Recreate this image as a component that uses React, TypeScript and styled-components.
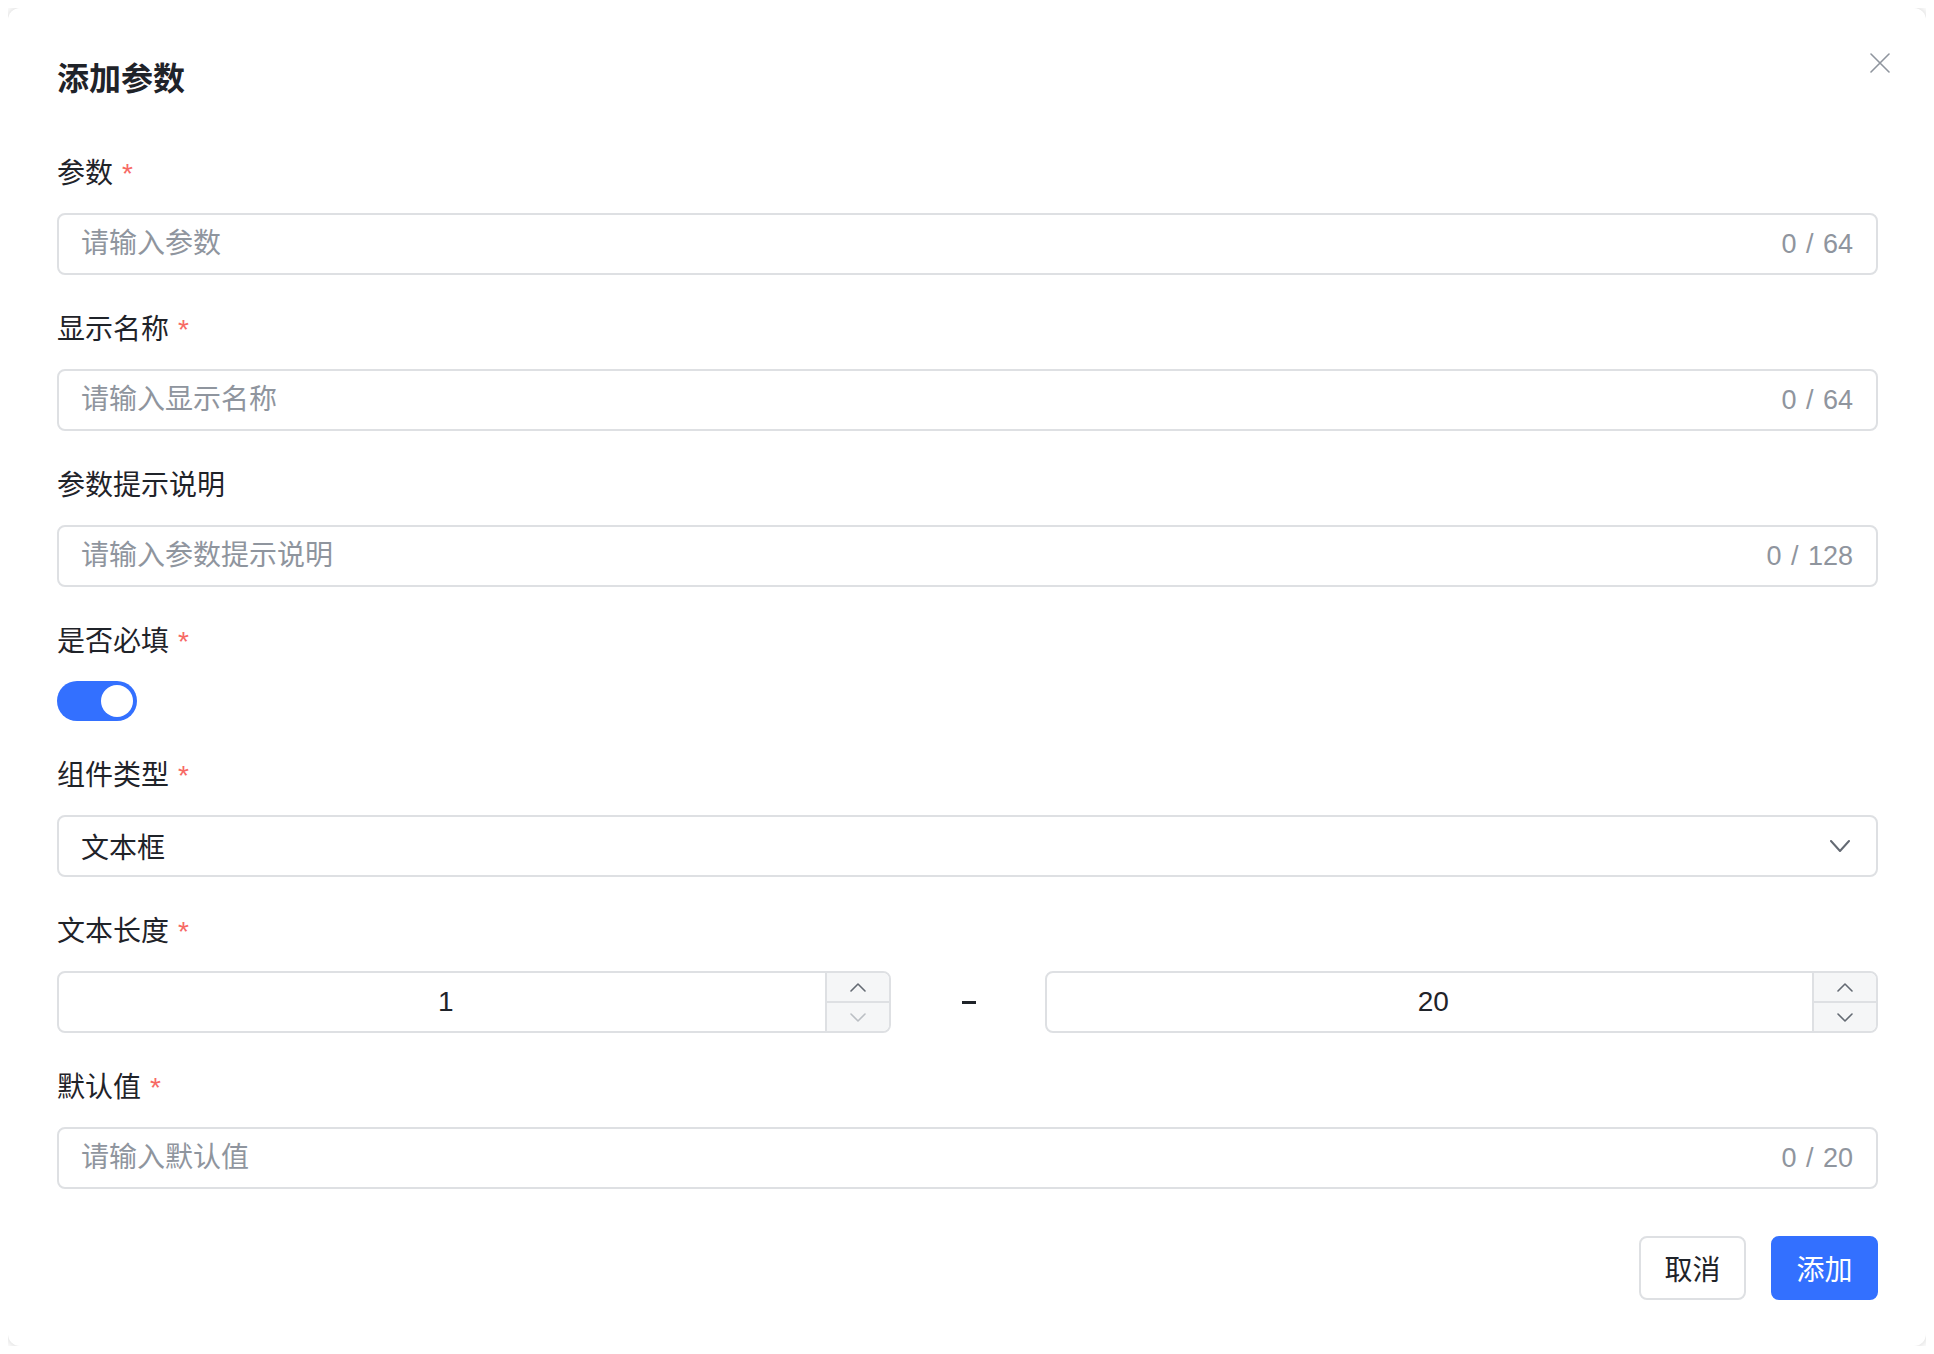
import styled, { createGlobalStyle } from "styled-components";

const GlobalCSS = createGlobalStyle`
  html, body {
    margin: 0;
    padding: 0;
    background: #ffffff;
  }
  body {
    margin: 8px;
    font-family: "Liberation Sans", "Noto Sans CJK SC", sans-serif;
    color: #1f2329;
  }
  * {
    box-sizing: border-box;
  }
`;

const Dialog = styled.div`
  position: relative;
  display: flex;
  flex-direction: column;
  height: calc(100vh - 16px);
  padding: 50px 48px 46px 49px;
  background: #ffffff;
  border-radius: 12px;
  box-shadow: 0 0 9px rgba(0, 0, 0, 0.2);
`;

const Title = styled.h2`
  margin: 0 0 55px;
  font-size: 32px;
  line-height: 42px;
  font-weight: 600;
  color: #1f2329;
`;

const CloseButton = styled.button`
  position: absolute;
  top: 45px;
  right: 36px;
  width: 20px;
  height: 20px;
  padding: 0;
  border: none;
  background: transparent;
  display: flex;
  align-items: center;
  justify-content: center;
  cursor: pointer;
`;

const FormItem = styled.div`
  margin-bottom: 36px;
`;

const Label = styled.div`
  font-size: 28px;
  line-height: 38px;
  margin-bottom: 20px;
  color: #1f2329;
`;

const Required = styled.span`
  color: #f76964;
  margin-left: 9px;
`;

const InputBox = styled.div`
  display: flex;
  align-items: center;
  height: 62px;
  padding: 0 23px 0 22px;
  border: 2px solid #dee0e3;
  border-radius: 8px;
  background: #ffffff;
`;

const TextInput = styled.input`
  flex: 1;
  min-width: 0;
  border: none;
  outline: none;
  background: transparent;
  font-family: inherit;
  font-size: 28px;
  color: #1f2329;
  padding: 0;

  &::placeholder {
    color: #8f959e;
  }
`;

const Count = styled.span`
  font-size: 27px;
  color: #8f959e;
  white-space: pre;
  word-spacing: 2px;
`;

const SelectValue = styled.span`
  flex: 1;
  font-size: 28px;
  color: #1f2329;
`;

const SelectArrow = styled.span`
  display: flex;
  margin-right: 3px;
`;

const Switch = styled.button<{ $on: boolean }>`
  position: relative;
  display: block;
  width: 80px;
  height: 40px;
  padding: 0;
  border: none;
  border-radius: 20px;
  background: ${({ $on }) => ($on ? "#3370ff" : "#bbbfc4")};
  cursor: pointer;

  &::after {
    content: "";
    position: absolute;
    top: 4px;
    left: ${({ $on }) => ($on ? "44px" : "4px")};
    width: 32px;
    height: 32px;
    border-radius: 50%;
    background: #ffffff;
  }
`;

const RangeRow = styled.div`
  display: grid;
  grid-template-columns: 1fr 154px 1fr;
  align-items: center;
`;

const Dash = styled.span`
  justify-self: center;
  width: 14px;
  height: 3px;
  background: #1f2329;
  margin-left: 2px;
`;

const NumberBox = styled.div`
  display: flex;
  height: 62px;
  border: 2px solid #dee0e3;
  border-radius: 8px;
  overflow: hidden;
`;

const NumberValue = styled.div`
  flex: 1;
  display: flex;
  align-items: center;
  justify-content: center;
  padding-left: 8px;
  font-size: 28px;
  color: #1f2329;
`;

const Stepper = styled.div`
  width: 64px;
  display: flex;
  flex-direction: column;
  border-left: 2px solid #dee0e3;
  background: #f5f6f7;
`;

const StepButton = styled.div<{ $top?: boolean }>`
  flex: 1;
  display: flex;
  align-items: center;
  justify-content: center;
  border-bottom: ${({ $top }) => ($top ? "2px solid #dee0e3" : "none")};
`;

const Footer = styled.div`
  margin-top: auto;
  display: flex;
  justify-content: flex-end;
  gap: 25px;
`;

const Button = styled.button<{ $primary?: boolean }>`
  height: 64px;
  min-width: 107px;
  padding: 0 22px;
  border-radius: 8px;
  font-family: inherit;
  font-size: 28px;
  cursor: pointer;
  border: 2px solid ${({ $primary }) => ($primary ? "#3370ff" : "#dee0e3")};
  background: ${({ $primary }) => ($primary ? "#3370ff" : "#ffffff")};
  color: ${({ $primary }) => ($primary ? "#ffffff" : "#1f2329")};
`;

const Chevron = ({ up, color, w, h, sw }: { up?: boolean; color: string; w: number; h: number; sw: number }) => (
  <svg width={w} height={h} viewBox={`0 0 ${w} ${h}`} fill="none">
    <polyline
      points={up ? `1,${h - 1} ${w / 2},1 ${w - 1},${h - 1}` : `1,1 ${w / 2},${h - 1} ${w - 1},1`}
      stroke={color}
      strokeWidth={sw}
      strokeLinecap="round"
      strokeLinejoin="round"
    />
  </svg>
);

const TextField = ({ label, placeholder, max, required }: { label: string; placeholder: string; max: number; required?: boolean }) => (
  <FormItem>
    <Label>
      {label}
      {required && <Required>*</Required>}
    </Label>
    <InputBox>
      <TextInput placeholder={placeholder} />
      <Count>0 / {max}</Count>
    </InputBox>
  </FormItem>
);

const NumberField = ({ value, minReached }: { value: number; minReached?: boolean }) => (
  <NumberBox>
    <NumberValue>{value}</NumberValue>
    <Stepper>
      <StepButton $top>
        <Chevron up color="#646a73" w={16} h={9} sw={1.6} />
      </StepButton>
      <StepButton>
        <Chevron color={minReached ? "#bbbfc4" : "#646a73"} w={16} h={9} sw={1.6} />
      </StepButton>
    </Stepper>
  </NumberBox>
);

export default function App() {
  return (
    <>
      <GlobalCSS />
      <Dialog>
        <Title>添加参数</Title>
        <CloseButton aria-label="关闭">
          <svg width="20" height="20" viewBox="0 0 20 20">
            <path d="M1 1L19 19M19 1L1 19" stroke="#8f959e" strokeWidth="1.6" strokeLinecap="round" />
          </svg>
        </CloseButton>

        <TextField label="参数" placeholder="请输入参数" max={64} required />
        <TextField label="显示名称" placeholder="请输入显示名称" max={64} required />
        <TextField label="参数提示说明" placeholder="请输入参数提示说明" max={128} />

        <FormItem>
          <Label>
            是否必填<Required>*</Required>
          </Label>
          <Switch $on aria-label="是否必填" />
        </FormItem>

        <FormItem>
          <Label>
            组件类型<Required>*</Required>
          </Label>
          <InputBox>
            <SelectValue>文本框</SelectValue>
            <SelectArrow>
              <Chevron color="#646a73" w={20} h={12} sw={2} />
            </SelectArrow>
          </InputBox>
        </FormItem>

        <FormItem>
          <Label>
            文本长度<Required>*</Required>
          </Label>
          <RangeRow>
            <NumberField value={1} minReached />
            <Dash />
            <NumberField value={20} />
          </RangeRow>
        </FormItem>

        <TextField label="默认值" placeholder="请输入默认值" max={20} required />

        <Footer>
          <Button>取消</Button>
          <Button $primary>添加</Button>
        </Footer>
      </Dialog>
    </>
  );
}
